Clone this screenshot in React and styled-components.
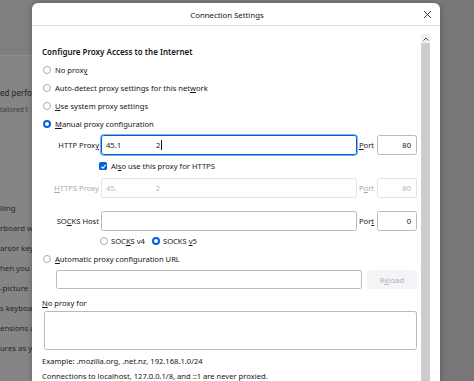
import React from "react";
import styled, { createGlobalStyle } from "styled-components";

const GlobalStyle = createGlobalStyle`
  html, body { margin: 0; padding: 0; }
  body {
    width: 474px;
    height: 381px;
    overflow: hidden;
    font-family: "Noto Sans", "Open Sans", sans-serif;
    color: #15141a;
  }
`;

const Screen = styled.div`
  position: relative;
  width: 474px;
  height: 381px;
  overflow: hidden;
  display: grid;
  grid-template-columns: 1fr 34px;
`;

const Page = styled.div`
  background: #858585;
  display: flex;
  flex-direction: column;
`;

const PageTop = styled.div`
  height: 55px;
  background: #7f7f7f;
  border-bottom: 1px solid #8e8e8e;
`;

const PageLine = styled.div`
  width: 32px;
  overflow: hidden;
  height: ${(p) => p.$h || 20}px;
  line-height: ${(p) => p.$h || 20}px;
  font-size: ${(p) => p.$size || 7.8}px;
  color: ${(p) => p.$color || "#262626"};
  white-space: nowrap;
  margin-top: ${(p) => p.$mt || 0}px;
`;

const SideShade = styled.div`
  background: #777777;
`;

const Dialog = styled.div`
  position: absolute;
  top: 3px;
  left: 32px;
  width: 408px;
  bottom: -10px;
  background: #ffffff;
  border-radius: 6px 6px 0 0;
  box-shadow: 0 0 6px rgba(0, 0, 0, 0.25);
  display: flex;
  flex-direction: column;
`;

const Header = styled.div`
  height: 22px;
  border-bottom: 1px solid #e2e2e6;
  display: flex;
  align-items: center;
`;

const Title = styled.div`
  flex: 1;
  text-align: center;
  font-size: 7.8px;
  padding-top: 1px;
`;

const CloseButton = styled.div`
  margin-right: 8px;
  width: 10px;
  height: 10px;
  display: flex;
  align-items: center;
  justify-content: center;
`;

const Body = styled.div`
  flex: 1;
  display: flex;
`;

const Content = styled.div`
  flex: 1;
  padding: 18px 4px 0 10px;
  display: flex;
  flex-direction: column;
`;

const Scrollbar = styled.div`
  width: 9px;
  margin: 8px 10px 0 0;
  display: flex;
  flex-direction: column;
`;

const ScrollArrow = styled.div`
  height: 9px;
  background: #f0f0f0;
  display: flex;
  align-items: center;
  justify-content: center;
`;

const ScrollTrack = styled.div`
  flex: 1;
  background: #cdcdcd;
`;

const Heading = styled.div`
  height: 15px;
  line-height: 15px;
  font-size: 8px;
  font-weight: 600;
  margin-bottom: 2px;
`;

const OptionRow = styled.div`
  height: 18px;
  display: flex;
  align-items: center;
  gap: ${(p) => p.$gap || 4}px;
  font-size: 7.6px;
  margin-top: ${(p) => p.$mt || 0}px;
  padding-left: ${(p) => p.$indent || 1}px;
`;

const Radio = styled.span`
  box-sizing: border-box;
  width: 8px;
  height: 8px;
  border-radius: 50%;
  flex: none;
  background: #fff;
  margin-left: ${(p) => p.$ml || 0}px;
  border: ${(p) => (p.$checked ? "2.4px solid #0061e0" : "1px solid #a9a9b3")};
`;

const Check = styled.span`
  width: 8px;
  height: 8px;
  border-radius: 1.5px;
  background: #0061e0;
  flex: none;
  display: flex;
  align-items: center;
  justify-content: center;
`;

const Key = styled.span`
  text-decoration: underline;
  text-underline-offset: 1px;
  text-decoration-thickness: 0.5px;
`;

const ProxyGrid = styled.div`
  display: grid;
  grid-template-columns: 57px 256px 16px 40px;
  column-gap: 2px;
  height: 20px;
  align-items: stretch;
  margin-top: ${(p) => p.$mt || 0}px;
  font-size: 7.6px;
  color: ${(p) => (p.$disabled ? "#a8a8ae" : "#15141a")};
`;

const Label = styled.div`
  display: flex;
  align-items: center;
  justify-content: ${(p) => (p.$end ? "flex-end" : "flex-start")};
  white-space: nowrap;
`;

const Field = styled.div`
  box-sizing: border-box;
  border: 1px solid
    ${(p) => (p.$focused ? "#0061e0" : p.$disabled ? "#e3e3e7" : "#b9b9c0")};
  box-shadow: ${(p) => (p.$focused ? "0 0 0 0.5px #0061e0" : "none")};
  border-radius: 2.5px;
  display: flex;
  align-items: center;
  justify-content: ${(p) => (p.$right ? "flex-end" : "flex-start")};
  padding: 0 5px 0 4px;
  font-size: 7.6px;
  color: ${(p) => (p.$disabled ? "#b4b4ba" : "#15141a")};
  height: ${(p) => p.$h || 20}px;
  flex: 1;
`;

const Gap = styled.span`
  display: inline-block;
  width: ${(p) => p.$w}px;
`;

const Caret = styled.span`
  display: inline-block;
  width: 0.8px;
  height: 10px;
  background: #15141a;
  margin-left: 1px;
`;

const UrlRow = styled.div`
  display: flex;
  gap: 5px;
  margin-top: 2px;
  padding-left: 14px;
`;

const Button = styled.div`
  width: 50px;
  height: 19px;
  background: #f4f4f6;
  border-radius: 2.5px;
  color: #b0b0b6;
  font-size: 7.6px;
  display: flex;
  align-items: center;
  justify-content: center;
`;

const Caption = styled.div`
  height: ${(p) => p.$h || 15}px;
  line-height: ${(p) => p.$h || 15}px;
  font-size: 7.6px;
  margin-top: ${(p) => p.$mt || 0}px;
  white-space: nowrap;
`;

const TextArea = styled.div`
  box-sizing: border-box;
  height: 39px;
  margin-left: 2px;
  border: 1px solid #b9b9c0;
  border-radius: 2.5px;
`;

const CheckMark = () => (
  <svg width="7" height="7" viewBox="0 0 10 10">
    <path d="M2 5.2 L4.2 7.4 L8.2 2.8" fill="none" stroke="#fff" strokeWidth="1.6" />
  </svg>
);

const CloseIcon = () => (
  <svg width="9" height="9" viewBox="0 0 10 10">
    <path d="M1 1 L9 9 M9 1 L1 9" stroke="#2b2a33" strokeWidth="1" />
  </svg>
);

const UpIcon = () => (
  <svg width="6" height="4" viewBox="0 0 6 4">
    <path d="M0.5 3.5 L3 1 L5.5 3.5" fill="none" stroke="#555" strokeWidth="1" />
  </svg>
);

const pageLines = [
  "lling",
  "rboard w",
  "arsor keys",
  "hen you s",
  "-picture",
  "s keyboa",
  "ensions a",
  "ures as y",
];

export default function App() {
  return (
    <>
      <GlobalStyle />
      <Screen>
        <Page>
          <PageTop />
          <PageLine $mt={27} $size={8}>ed perfor</PageLine>
          <PageLine $h={14} $size={6.6} $color="#3a3a3a">tailored t</PageLine>
          {pageLines.map((text, i) => (
            <PageLine key={i} $mt={i === 0 ? 81 : 0} $size={7.8}>
              {text}
            </PageLine>
          ))}
        </Page>
        <SideShade />

        <Dialog>
          <Header>
            <Title>Connection Settings</Title>
            <CloseButton>
              <CloseIcon />
            </CloseButton>
          </Header>
          <Body>
            <Content>
              <Heading>Configure Proxy Access to the Internet</Heading>
              <OptionRow>
                <Radio />
                <span>
                  No prox<Key>y</Key>
                </span>
              </OptionRow>
              <OptionRow>
                <Radio />
                <span>
                  Auto-detect proxy settings for this net<Key>w</Key>ork
                </span>
              </OptionRow>
              <OptionRow>
                <Radio />
                <span>
                  <Key>U</Key>se system proxy settings
                </span>
              </OptionRow>
              <OptionRow>
                <Radio $checked />
                <span>
                  <Key>M</Key>anual proxy configuration
                </span>
              </OptionRow>

              <ProxyGrid $mt={2}>
                <Label $end>
                  HTTP Prox<Key>y</Key>
                </Label>
                <Field $focused>
                  45.1
                  <Gap $w={35} />2<Caret />
                </Field>
                <Label>
                  <Key>P</Key>ort
                </Label>
                <Field $right>80</Field>
              </ProxyGrid>

              <OptionRow $indent={57} $mt={2}>
                <Check>
                  <CheckMark />
                </Check>
                <span>
                  Al<Key>s</Key>o use this proxy for HTTPS
                </span>
              </OptionRow>

              <ProxyGrid $mt={3} $disabled>
                <Label $end>
                  <Key>H</Key>TTPS Proxy
                </Label>
                <Field $disabled>
                  45.
                  <Gap $w={39} />2
                </Field>
                <Label>
                  P<Key>o</Key>rt
                </Label>
                <Field $disabled $right>
                  80
                </Field>
              </ProxyGrid>

              <ProxyGrid $mt={13}>
                <Label $end>
                  SO<Key>C</Key>KS Host
                </Label>
                <Field />
                <Label>
                  Por<Key>t</Key>
                </Label>
                <Field $right>0</Field>
              </ProxyGrid>

              <OptionRow $indent={58} $mt={1} $gap={3}>
                <Radio />
                <span>
                  SOC<Key>K</Key>S v4
                </span>
                <Radio $checked $ml={4} />
                <span>
                  SOCKS <Key>v</Key>5
                </span>
              </OptionRow>

              <OptionRow>
                <Radio />
                <span>
                  <Key>A</Key>utomatic proxy configuration URL
                </span>
              </OptionRow>

              <UrlRow>
                <Field $h={19} />
                <Button>
                  R<Key>e</Key>load
                </Button>
              </UrlRow>

              <Caption $h={16} $mt={6}>
                <Key>N</Key>o proxy for
              </Caption>
              <TextArea />
              <Caption $mt={4}>Example: .mozilla.org, .net.nz, 192.168.1.0/24</Caption>
              <Caption>Connections to localhost, 127.0.0.1/8, and ::1 are never proxied.</Caption>
            </Content>
            <Scrollbar>
              <ScrollArrow>
                <UpIcon />
              </ScrollArrow>
              <ScrollTrack />
            </Scrollbar>
          </Body>
        </Dialog>
      </Screen>
    </>
  );
}
